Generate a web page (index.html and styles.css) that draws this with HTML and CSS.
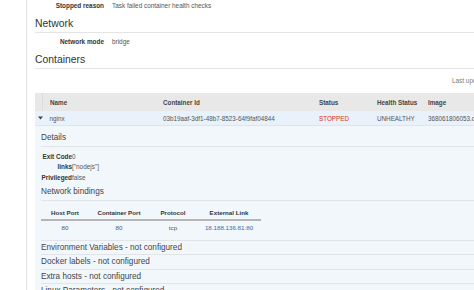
FILE: index.html
```html
<!DOCTYPE html>
<html lang="en">
<head>
    <meta charset="UTF-8">
    <meta name="viewport" content="width=device-width, initial-scale=1.0">
    <title>Task details</title>
    <link rel="stylesheet" href="styles.css">
</head>
<body>
    <div class="page">
        <div class="main">
            <div class="kv">
                <div class="kv-label">Stopped reason</div>
                <div class="kv-value">Task failed container health checks</div>
            </div>

            <h2 class="section-title">Network</h2>
            <div class="kv">
                <div class="kv-label">Network mode</div>
                <div class="kv-value">bridge</div>
            </div>

            <h2 class="section-title">Containers</h2>
            <div class="last-updated">Last updated on</div>

            <table class="containers">
                <thead>
                    <tr>
                        <th class="col-toggle"></th>
                        <th class="col-name">Name</th>
                        <th class="col-id">Container Id</th>
                        <th class="col-status">Status</th>
                        <th class="col-health">Health Status</th>
                        <th class="col-image">Image</th>
                    </tr>
                </thead>
                <tbody>
                    <tr class="row-open">
                        <td class="col-toggle">
                            <svg class="caret" width="5" height="4" viewBox="0 0 5 4"><path d="M0 0.5 L5 0.5 L2.5 3.5 Z" fill="#444"/></svg>
                        </td>
                        <td>nginx</td>
                        <td>03b19aaf-3df1-48b7-8523-64f9faf04844</td>
                        <td class="stopped">STOPPED</td>
                        <td>UNHEALTHY</td>
                        <td>368061806053.dkr.ecr.us-east-2.amazonaws.com/nginx</td>
                    </tr>
                </tbody>
            </table>

            <div class="details">
                <h3 class="sub-title">Details</h3>
                <dl class="props">
                    <dt>Exit Code</dt><dd>0</dd>
                    <dt>links</dt><dd>["nodejs"]</dd>
                    <dt>Privileged</dt><dd>false</dd>
                </dl>

                <h3 class="sub-title">Network bindings</h3>
                <div class="bindings-wrap">
                    <table class="bindings">
                        <thead>
                            <tr>
                                <th class="b1">Host Port</th>
                                <th class="b2">Container Port</th>
                                <th class="b3">Protocol</th>
                                <th class="b4">External Link</th>
                            </tr>
                        </thead>
                        <tbody>
                            <tr>
                                <td>80</td>
                                <td>80</td>
                                <td>tcp</td>
                                <td><a href="#">18.188.136.81:80</a></td>
                            </tr>
                        </tbody>
                    </table>
                </div>

                <div class="collapsed">Environment Variables - not configured</div>
                <div class="collapsed">Docker labels - not configured</div>
                <div class="collapsed">Extra hosts - not configured</div>
                <div class="collapsed">Linux Parameters - not configured</div>
            </div>
        </div>
    </div>
</body>
</html>
```

FILE: styles.css
```css
body {
    margin: 0;
    font-family: "Liberation Sans", Arial, sans-serif;
    color: #444;
    background: #fff;
    overflow: hidden;
}
.page {
    padding-left: 26px;
}
.main {
    width: 600px;
    border-left: 1px solid #e2e2e2;
    padding-left: 8px;
    min-height: 400px;
}
.kv {
    display: flex;
    font-size: 6.4px;
    line-height: 12px;
}
.kv-label {
    width: 69px;
    text-align: right;
    font-weight: bold;
    color: #333;
    padding-right: 8px;
}
.kv-value {
    color: #555;
}
.section-title {
    font-size: 10.4px;
    font-weight: normal;
    color: #333;
    line-height: 14px;
    margin: 5px 0 0;
    padding-bottom: 1px;
    border-bottom: 1px solid #e4e4e4;
}
.section-title + .kv {
    margin-top: 3px;
}
.last-updated {
    font-size: 6.4px;
    line-height: 10px;
    color: #777;
    margin-top: 7px;
    padding-left: 417px;
}
.containers {
    margin-top: 7px;
    border-collapse: collapse;
    table-layout: fixed;
    width: 543px;
    font-size: 6.3px;
}
.containers th {
    background: #e8e8e8;
    font-weight: bold;
    color: #444;
    text-align: left;
    height: 18px;
    padding: 0 0 0 7px;
}
.containers td {
    background: #e9f1fa;
    color: #555;
    height: 14px;
    padding: 0 0 0 7px;
    white-space: nowrap;
    overflow: hidden;
    border-bottom: 1px solid #dde4ec;
}
.containers .col-toggle {
    width: 8px;
    padding: 0;
    text-align: center;
}
.containers th.col-toggle {
    width: 7px;
    border-right: 1px solid #dcdcdc;
}
.col-name { width: 106px; }
.col-id { width: 149px; }
.col-status { width: 51px; }
.col-health { width: 44px; }
.col-image { width: 150px; }
.caret {
    display: block;
    margin-left: 3px;
}
.containers td.stopped {
    color: #d3302c;
}
.details {
    background: #f2f7fc;
    width: 560px;
    padding: 6px 0 20px 6px;
    box-sizing: border-box;
}
.sub-title {
    font-size: 8.2px;
    font-weight: normal;
    color: #444;
    line-height: 11px;
    margin: 0;
    padding-bottom: 3px;
    border-bottom: 1px solid #e1e5ea;
}
.props {
    display: grid;
    grid-template-columns: 31px 1fr;
    font-size: 6.4px;
    line-height: 10.3px;
    margin: 5px 0 3px;
}
.props dt {
    text-align: right;
    font-weight: bold;
    color: #333;
}
.props dd {
    margin: 0;
    color: #555;
}
.bindings-wrap {
    padding: 6px 0 6px;
    border-bottom: 1px solid #e1e5ea;
}
.bindings {
    border-collapse: collapse;
    table-layout: fixed;
    width: 220px;
    font-size: 6.2px;
}
.bindings th {
    font-weight: bold;
    color: #333;
    height: 12px;
    padding: 0;
    border-bottom: 2px solid #b5b5b5;
}
.bindings td {
    text-align: center;
    color: #555;
    height: 13px;
    padding: 0;
}
.bindings .b1 { width: 48px; }
.bindings .b2 { width: 60px; }
.bindings .b3 { width: 48px; }
.bindings .b4 { width: 64px; }
.bindings a {
    color: #2a6db5;
    text-decoration: none;
}
.collapsed {
    font-size: 8.2px;
    color: #444;
    line-height: 11px;
    padding: 1px 0 1.5px;
    border-bottom: 1px solid #e1e5ea;
}
```
